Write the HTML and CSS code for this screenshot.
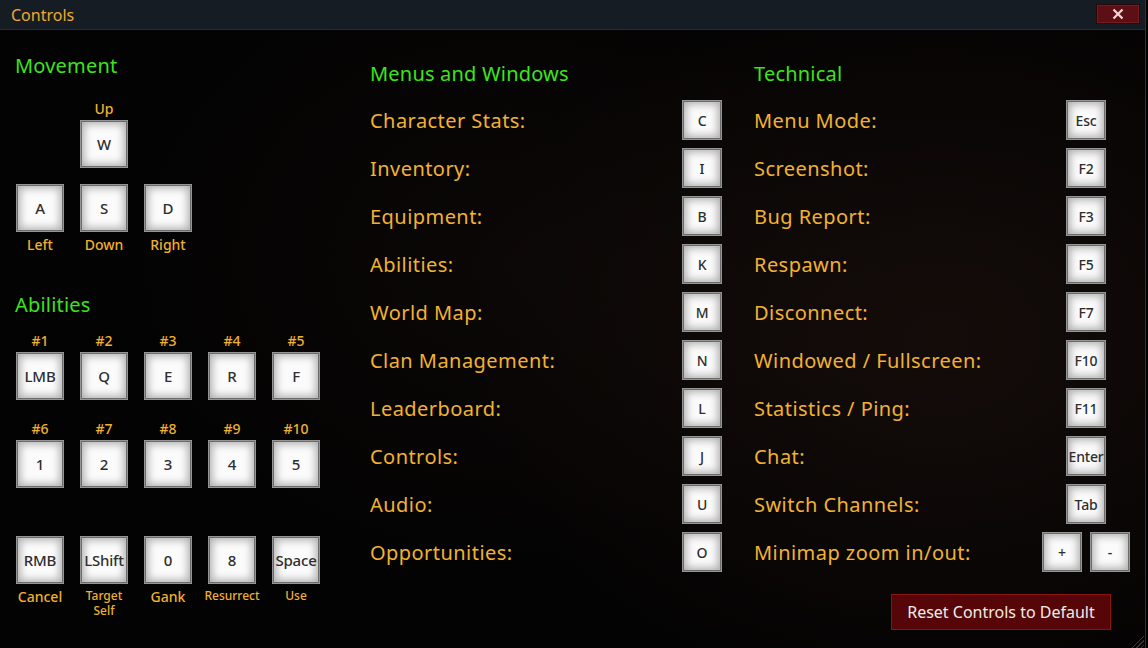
FILE: index.html
```html
<!DOCTYPE html>
<html lang="en">
  <head>
    <meta charset="UTF-8" />
    <title>Controls</title>
    <link rel="stylesheet" href="styles.css">
  </head>
  <body>
    <div class="window">
      <!-- Title bar -->
      <div class="titlebar">
        <span class="title">Controls</span>
        <button class="close">
          <svg width="12" height="12" viewBox="0 0 12 12">
            <path d="M1.5 1.5 L10.5 10.5 M10.5 1.5 L1.5 10.5" stroke="#f2d6d6" stroke-width="2.2" fill="none" />
          </svg>
        </button>
      </div>

      <div class="content">
        <!-- Left column -->
        <div class="col col-left">
          <h2 class="heading">Movement</h2>
          <div class="keyrow move-top">
            <div class="cell slot2">
              <span class="cap">Up</span>
              <span class="key">W</span>
            </div>
          </div>
          <div class="keyrow move-bottom">
            <div class="cell"><span class="key">A</span><span class="cap below">Left</span></div>
            <div class="cell"><span class="key">S</span><span class="cap below">Down</span></div>
            <div class="cell"><span class="key">D</span><span class="cap below">Right</span></div>
          </div>

          <h2 class="heading abilities">Abilities</h2>
          <div class="keyrow ab1">
            <div class="cell"><span class="cap">#1</span><span class="key">LMB</span></div>
            <div class="cell"><span class="cap">#2</span><span class="key">Q</span></div>
            <div class="cell"><span class="cap">#3</span><span class="key">E</span></div>
            <div class="cell"><span class="cap">#4</span><span class="key">R</span></div>
            <div class="cell"><span class="cap">#5</span><span class="key">F</span></div>
          </div>
          <div class="keyrow ab2">
            <div class="cell"><span class="cap">#6</span><span class="key">1</span></div>
            <div class="cell"><span class="cap">#7</span><span class="key">2</span></div>
            <div class="cell"><span class="cap">#8</span><span class="key">3</span></div>
            <div class="cell"><span class="cap">#9</span><span class="key">4</span></div>
            <div class="cell"><span class="cap">#10</span><span class="key">5</span></div>
          </div>
          <div class="keyrow ab3">
            <div class="cell"><span class="key">RMB</span><span class="cap below">Cancel</span></div>
            <div class="cell"><span class="key">LShift</span><span class="cap below small">Target<br>Self</span></div>
            <div class="cell"><span class="key">0</span><span class="cap below">Gank</span></div>
            <div class="cell"><span class="key">8</span><span class="cap below small">Resurrect</span></div>
            <div class="cell"><span class="key">Space</span><span class="cap below small">Use</span></div>
          </div>
        </div>

        <!-- Middle column -->
        <div class="col col-mid">
          <h2 class="heading">Menus and Windows</h2>
          <div class="rows">
            <div class="row"><span class="label">Character Stats:</span><span class="key sm">C</span></div>
            <div class="row"><span class="label">Inventory:</span><span class="key sm">I</span></div>
            <div class="row"><span class="label">Equipment:</span><span class="key sm">B</span></div>
            <div class="row"><span class="label">Abilities:</span><span class="key sm">K</span></div>
            <div class="row"><span class="label">World Map:</span><span class="key sm">M</span></div>
            <div class="row"><span class="label">Clan Management:</span><span class="key sm">N</span></div>
            <div class="row"><span class="label">Leaderboard:</span><span class="key sm">L</span></div>
            <div class="row"><span class="label">Controls:</span><span class="key sm">J</span></div>
            <div class="row"><span class="label">Audio:</span><span class="key sm">U</span></div>
            <div class="row"><span class="label">Opportunities:</span><span class="key sm">O</span></div>
          </div>
        </div>

        <!-- Right column -->
        <div class="col col-right">
          <h2 class="heading">Technical</h2>
          <div class="rows">
            <div class="row"><span class="label">Menu Mode:</span><span class="slot"><span class="key sm">Esc</span></span></div>
            <div class="row"><span class="label">Screenshot:</span><span class="slot"><span class="key sm">F2</span></span></div>
            <div class="row"><span class="label">Bug Report:</span><span class="slot"><span class="key sm">F3</span></span></div>
            <div class="row"><span class="label">Respawn:</span><span class="slot"><span class="key sm">F5</span></span></div>
            <div class="row"><span class="label">Disconnect:</span><span class="slot"><span class="key sm">F7</span></span></div>
            <div class="row"><span class="label">Windowed / Fullscreen:</span><span class="slot"><span class="key sm">F10</span></span></div>
            <div class="row"><span class="label">Statistics / Ping:</span><span class="slot"><span class="key sm">F11</span></span></div>
            <div class="row"><span class="label">Chat:</span><span class="slot"><span class="key sm">Enter</span></span></div>
            <div class="row"><span class="label">Switch Channels:</span><span class="slot"><span class="key sm">Tab</span></span></div>
            <div class="row"><span class="label">Minimap zoom in/out:</span><span class="slot"><span class="key sm">+</span><span class="key sm">-</span></span></div>
          </div>
          <button class="reset">Reset Controls to Default</button>
        </div>
      </div>

      <div class="grip"></div>
    </div>
  </body>
</html>
```

FILE: styles.css
```css
* {
  box-sizing: border-box;
  font-family: "Noto Sans", sans-serif;
}

html,
body {
  margin: 0;
  padding: 0;
  background-color: #000;
}

.window {
  position: relative;
  width: 1146px;
  height: 648px;
  border-right: 1px solid #3a302a;
  background:
    radial-gradient(ellipse 480px 360px at 82% 52%, rgba(34, 20, 15, 0.55), rgba(0, 0, 0, 0) 100%),
    radial-gradient(ellipse 380px 300px at 45% 40%, rgba(20, 13, 10, 0.4), rgba(0, 0, 0, 0) 100%),
    #040303;
}

.titlebar {
  height: 30px;
  display: flex;
  align-items: center;
  justify-content: space-between;
  padding-left: 11px;
  padding-right: 5px;
  background-color: #161c23;
  border-bottom: 1px solid #262d35;
}

.title {
  color: #f0a832;
  font-size: 16px;
  line-height: 20px;
}

.close {
  width: 44px;
  height: 20px;
  margin-top: -1px;
  padding: 0;
  display: flex;
  align-items: center;
  justify-content: center;
  background-color: #5c0f14;
  border: 1px solid #2a080a;
  box-shadow: inset 0 0 0 1px #7a1a1e;
}

.content {
  display: flex;
  padding-left: 15px;
}

.heading {
  margin: 0;
  color: #3ce41c;
  font-size: 20px;
  font-weight: normal;
  line-height: 24px;
  letter-spacing: 0.2px;
}

/* left column */
.col-left {
  width: 306px;
}

.col-left .heading {
  margin-top: 24px;
}

.col-left .heading.abilities {
  margin-top: 39px;
}

.keyrow {
  display: grid;
  grid-template-columns: repeat(5, 48px);
  column-gap: 16px;
  padding-left: 1px;
}

.move-top {
  margin-top: 22px;
}

.move-bottom {
  margin-top: 16px;
}

.slot2 {
  grid-column: 2;
}

.ab1 {
  margin-top: 15px;
}

.ab2 {
  margin-top: 20px;
}

.ab3 {
  margin-top: 48px;
}

.cell {
  display: flex;
  flex-direction: column;
  align-items: center;
}

.cap {
  color: #f0b030;
  font-size: 14px;
  font-weight: 500;
  line-height: 18px;
  height: 18px;
  margin-bottom: 2px;
  white-space: nowrap;
  text-align: center;
}

.cap.below {
  margin-bottom: 0;
  margin-top: 4px;
}

.cap.small {
  font-size: 12px;
  line-height: 15px;
}

.key {
  width: 48px;
  height: 48px;
  display: flex;
  align-items: center;
  justify-content: center;
  color: #2e2e2e;
  font-size: 15px;
  font-weight: 500;
  background-color: #fbfbfb;
  border: 1px solid #959595;
  box-shadow: inset 0 0 0 1px #6c6c6c, inset 0 0 8px 3px rgba(0, 0, 0, 0.32);
  white-space: nowrap;
  letter-spacing: -0.2px;
}

.key.sm {
  width: 40px;
  height: 40px;
  font-size: 14px;
}

/* menu columns */
.col-mid {
  width: 352px;
  margin-left: 49px;
}

.col-right {
  width: 376px;
  margin-left: 32px;
  display: flex;
  flex-direction: column;
}

.col-mid .heading,
.col-right .heading {
  margin-top: 32px;
}

.rows {
  margin-top: 14px;
  display: flex;
  flex-direction: column;
  gap: 8px;
}

.row {
  height: 40px;
  display: flex;
  align-items: center;
  justify-content: space-between;
}

.label {
  color: #f2b233;
  font-size: 20px;
  line-height: 24px;
  letter-spacing: 0.45px;
  margin-top: 2px;
}

.slot {
  width: 88px;
  display: flex;
  justify-content: center;
  gap: 8px;
}

.reset {
  align-self: flex-end;
  margin-top: 22px;
  margin-right: 19px;
  width: 220px;
  height: 36px;
  padding: 0;
  color: #f2ece6;
  font-size: 16px;
  background-color: #560608;
  border: 1px solid #8a1410;
}

.grip {
  position: absolute;
  right: 1px;
  bottom: 0;
  width: 14px;
  height: 14px;
  background: repeating-linear-gradient(135deg, transparent 0 2px, #3a3634 2px 3px);
  clip-path: polygon(100% 0, 100% 100%, 0 100%);
}
```
